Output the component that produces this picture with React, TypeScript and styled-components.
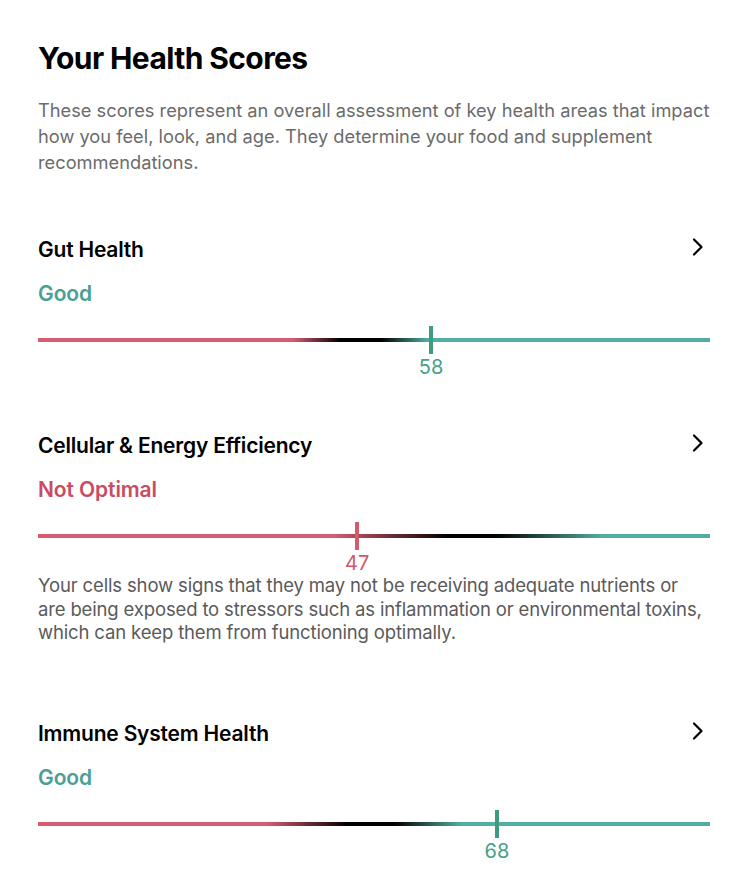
import React from 'react'
import styled, { createGlobalStyle } from 'styled-components'

const GlobalStyle = createGlobalStyle`
  body {
    margin: 0;
    background: #ffffff;
    font-family: Inter, "Noto Sans", sans-serif;
  }
`

const RED = '#d85c70'
const TEAL = '#52aea2'

const Page = styled.div`
  padding: 40px 40px 0 38px;
  color: #000;
`

const Title = styled.h1`
  margin: 0;
  font-size: 30px;
  line-height: 36px;
  font-weight: 700;
  letter-spacing: -0.6px;
`

const Intro = styled.p`
  margin: 21px 0 0 0;
  font-size: 18.25px;
  line-height: 26px;
  color: #6b6b6b;
`

const List = styled.div`
  margin-top: 61px;
`

const Section = styled.section`
  padding-bottom: 54px;
`

const Header = styled.div`
  display: flex;
  justify-content: space-between;
  align-items: flex-start;
`

const Name = styled.h2`
  margin: 0;
  font-size: 21px;
  line-height: 28px;
  font-weight: 600;
  letter-spacing: -0.2px;
`

const Chevron = styled.svg`
  margin: 2px 6px 0 0;
`

const Status = styled.div<{ $good: boolean }>`
  margin-top: 16px;
  font-size: 21px;
  line-height: 28px;
  font-weight: 600;
  letter-spacing: -0.1px;
  color: ${(p) => (p.$good ? '#4b9f95' : '#c94c62')};
`

const Meter = styled.div`
  margin-top: 30px;
  padding-bottom: 36px;
`

const Track = styled.div<{ $stops: number[] }>`
  position: relative;
  height: 4px;
  background: linear-gradient(
    to right,
    ${RED} 0%,
    ${RED} ${(p) => p.$stops[0]}%,
    #000 ${(p) => p.$stops[1]}%,
    #000 ${(p) => p.$stops[2]}%,
    ${TEAL} ${(p) => p.$stops[3]}%,
    ${TEAL} 100%
  );
`

const Marker = styled.div<{ $good: boolean }>`
  position: absolute;
  top: -12px;
  width: 4px;
  height: 28px;
  transform: translateX(-50%);
  background: ${(p) => (p.$good ? '#3f9b80' : '#d65a6f')};
`

const Value = styled.div<{ $good: boolean }>`
  position: absolute;
  top: 17px;
  transform: translateX(-50%);
  font-size: 20px;
  line-height: 24px;
  color: ${(p) => (p.$good ? '#46a185' : '#d4566b')};
`

const Note = styled.p`
  margin: 0 0 21px 0;
  font-size: 18.5px;
  line-height: 23.5px;
  color: #5a5a5a;
  letter-spacing: -0.15px;
`

type Score = {
  name: string
  status: string
  good: boolean
  value: number
  stops: number[]
  note?: string
}

const scores: Score[] = [
  { name: 'Gut Health', status: 'Good', good: true, value: 58.5, stops: [38, 45, 51, 58] },
  {
    name: 'Cellular & Energy Efficiency',
    status: 'Not Optimal',
    good: false,
    value: 47.5,
    stops: [44, 61, 68, 84],
    note: 'Your cells show signs that they may not be receiving adequate nutrients or are being exposed to stressors such as inflammation or environmental toxins, which can keep them from functioning optimally.',
  },
  { name: 'Immune System Health', status: 'Good', good: true, value: 68.3, stops: [34, 46, 53, 63] },
]

function ScoreRow({ score }: { score: Score }) {
  return (
    <Section>
      <Header>
        <Name>{score.name}</Name>
        <Chevron width="12" height="18" viewBox="0 0 12 18" fill="none">
          <path d="M2 1.5 L9.5 9 L2 16.5" stroke="#000" strokeWidth="2.2" strokeLinecap="round" strokeLinejoin="round" />
        </Chevron>
      </Header>
      <Status $good={score.good}>{score.status}</Status>
      <Meter>
        <Track $stops={score.stops}>
          <Marker $good={score.good} style={{ left: `${score.value}%` }} />
          <Value $good={score.good} style={{ left: `${score.value}%` }}>
            {Math.floor(score.value)}
          </Value>
        </Track>
      </Meter>
      {score.note && <Note>{score.note}</Note>}
    </Section>
  )
}

export default function App() {
  return (
    <>
      <GlobalStyle />
      <Page>
        <Title>Your Health Scores</Title>
        <Intro>
          These scores represent an overall assessment of key health areas that impact how you
          feel, look, and age. They determine your food and supplement recommendations.
        </Intro>
        <List>
          {scores.map((s) => (
            <ScoreRow key={s.name} score={s} />
          ))}
        </List>
      </Page>
    </>
  )
}
